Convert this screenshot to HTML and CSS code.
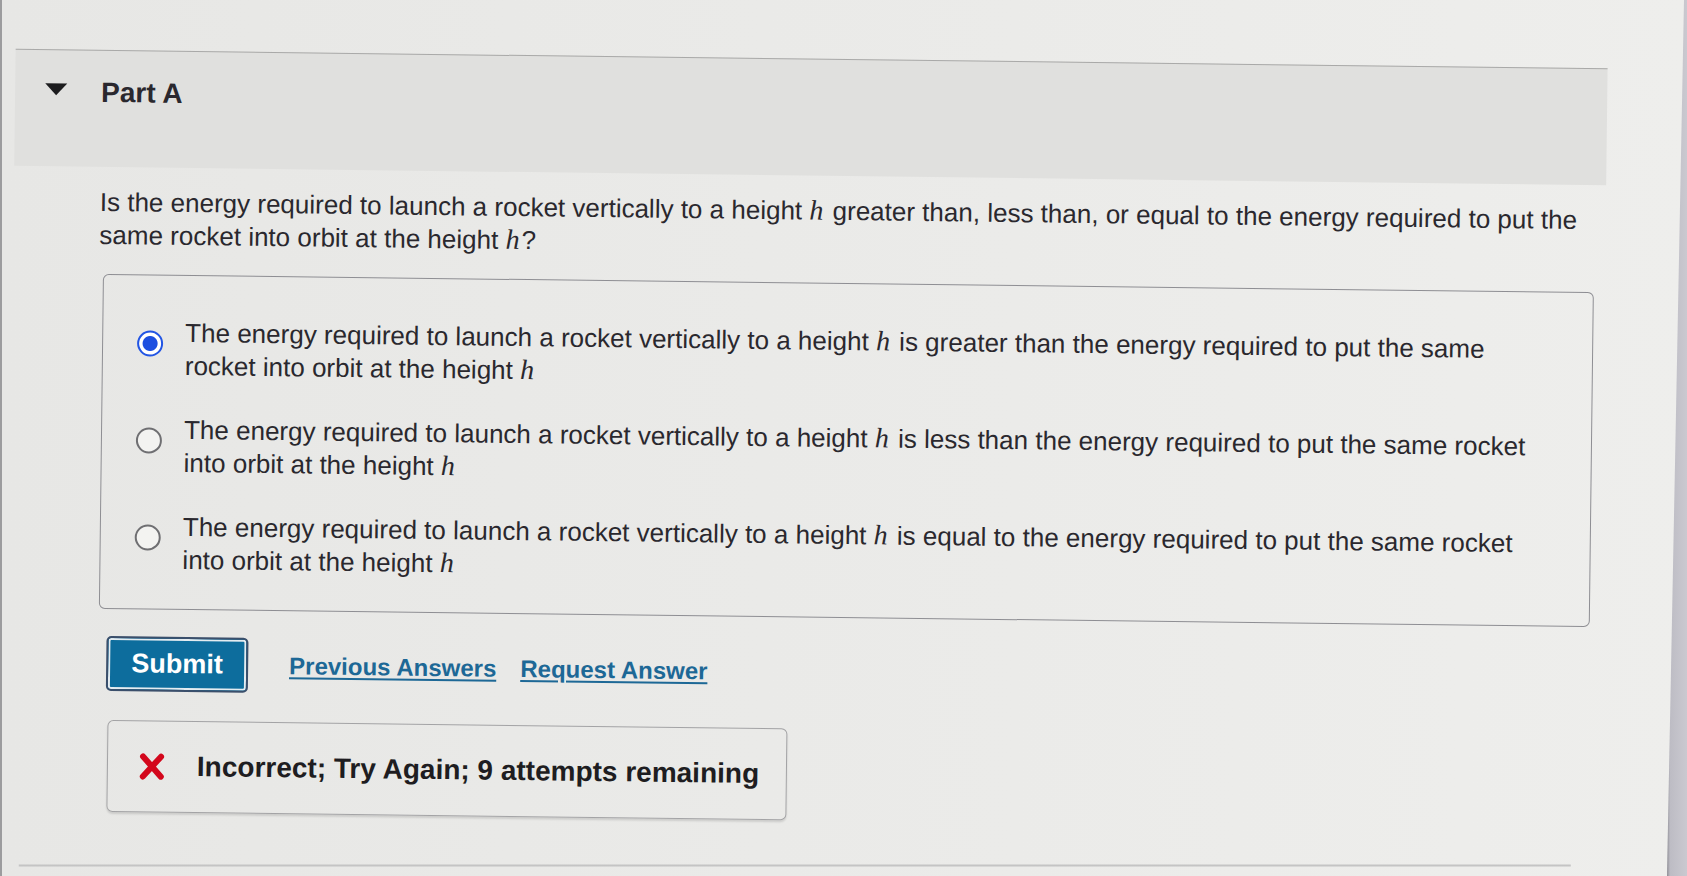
FILE: index.html
```
<!DOCTYPE html>
<html lang="en">
<head>
    <meta charset="UTF-8">
    <meta name="viewport" content="width=device-width, initial-scale=1.0">
    <title>Part A</title>
    <link rel="stylesheet" href="styles.css">
</head>
<body>
    <div class="screen">
        <div class="page">
            <section class="part">
                <header class="part-head">
                    <span class="toggle"></span>
                    <h2>Part A</h2>
                </header>
                <div class="part-body">
                    <p class="question">Is the energy required to launch a rocket vertically to a height <span class="var">h</span> greater than, less than, or equal to the energy required to put the same rocket into orbit at the height <span class="var">h</span>?</p>

                    <div class="choices">
                        <label class="choice">
                            <input type="radio" name="answer" checked>
                            <span>The energy required to launch a rocket vertically to a height <span class="var">h</span> is greater than the energy required to put the same rocket into orbit at the height <span class="var">h</span></span>
                        </label>
                        <label class="choice">
                            <input type="radio" name="answer">
                            <span>The energy required to launch a rocket vertically to a height <span class="var">h</span> is less than the energy required to put the same rocket into orbit at the height <span class="var">h</span></span>
                        </label>
                        <label class="choice">
                            <input type="radio" name="answer">
                            <span>The energy required to launch a rocket vertically to a height <span class="var">h</span> is equal to the energy required to put the same rocket into orbit at the height <span class="var">h</span></span>
                        </label>
                    </div>

                    <div class="actions">
                        <button class="submit">Submit</button>
                        <a href="#" class="link">Previous Answers</a>
                        <a href="#" class="link">Request Answer</a>
                    </div>

                    <div class="feedback">
                        <svg class="cross" width="28" height="28" viewBox="0 0 28 28">
                            <path d="M5 4 L23 24 M23 4 L5 24" stroke="#d3071c" stroke-width="6" stroke-linecap="round"/>
                        </svg>
                        <span>Incorrect; Try Again; 9 attempts remaining</span>
                    </div>
                </div>
            </section>
            <div class="bottom-rule"></div>
        </div>
        <div class="bezel"></div>
    </div>
</body>
</html>
```

FILE: styles.css
```
html, body {
    margin: 0;
    padding: 0;
}
body {
    font-family: "Liberation Sans", Arial, Helvetica, sans-serif;
    color: #2a282e;
    background-color: #e9e9e7;
    overflow: hidden;
}
.screen {
    display: flex;
    width: 1687px;
    height: 876px;
    overflow: hidden;
    border-left: 2px solid #9c9c9e;
    box-sizing: border-box;
    background: linear-gradient(to right, #e7e7e5, #ebebe9 60%, #eeeeec);
}
.page {
    flex: 1;
    padding-left: 9px;
    transform: rotate(0.7deg);
    transform-origin: 843px 438px;
}
.bezel {
    width: 20px;
    margin-left: -20px;
    background: linear-gradient(to right, #8d8c94, #bdbcc4 3px, #cac9d0);
    clip-path: polygon(17px 0, 20px 0, 20px 100%, 0 100%);
}
.part {
    width: 1592px;
}
.part-head {
    display: flex;
    align-items: center;
    margin-top: 59px;
    padding: 28px 0 60px 30px;
    border-top: 1px solid #a9a9a8;
    background-color: #e0e0de;
}
.toggle {
    width: 0;
    height: 0;
    border-left: 11px solid transparent;
    border-right: 11px solid transparent;
    border-top: 12px solid #1c1c1e;
    margin-right: 34px;
    margin-bottom: 6px;
}
.part-head h2 {
    margin: 0;
    font-size: 28px;
    line-height: 28px;
    font-weight: bold;
}
.part-body {
    padding-left: 89px;
}
.question {
    margin: 19px 0 0 -3px;
    font-size: 26px;
    line-height: 33px;
    padding-right: 6px;
}
.var {
    font-family: "Liberation Serif", "DejaVu Serif", serif;
    font-style: italic;
    font-size: 28px;
    line-height: 1;
    padding-right: 2px;
}
.choices {
    margin: 22px 0 0 1px;
    width: 1491px;
    box-sizing: border-box;
    padding: 41px 46px 32px 34px;
    border: 1px solid #8e8e93;
    border-radius: 6px;
    display: flex;
    flex-direction: column;
    gap: 31px;
}
.choice {
    display: flex;
    align-items: flex-start;
    gap: 22px;
    font-size: 26px;
    line-height: 33px;
}
.choice input {
    appearance: none;
    -webkit-appearance: none;
    flex: none;
    width: 26px;
    height: 26px;
    margin: 14px 0 0 0;
    border: 2px solid #6f6f72;
    border-radius: 50%;
    background-color: #f3f3f1;
    box-sizing: border-box;
}
.choice input:checked {
    border-color: #2255e4;
    background: radial-gradient(circle, #1d4fe0 0 7px, #ffffff 8px);
}
.actions {
    display: flex;
    align-items: center;
    margin: 27px 0 0 9px;
}
.submit {
    width: 142px;
    height: 55px;
    font-family: inherit;
    font-size: 27px;
    font-weight: bold;
    color: #ffffff;
    background-color: #0d6d9d;
    border: 2px solid #3b4f6b;
    border-radius: 5px;
    box-shadow: inset 0 0 0 2px #e4ecf1;
    cursor: pointer;
}
.link {
    font-size: 24px;
    font-weight: bold;
    color: #1d6896;
    text-decoration: underline;
    text-underline-offset: 3px;
    margin-left: 24px;
}
.submit + .link {
    margin-left: 41px;
}
.feedback {
    display: flex;
    align-items: center;
    gap: 31px;
    width: 680px;
    height: 92px;
    box-sizing: border-box;
    margin: 29px 0 0 11px;
    padding-left: 30px;
    border: 1px solid #a3a3a5;
    border-radius: 6px;
    box-shadow: 0 2px 2px rgba(0,0,0,0.12);
    font-size: 28px;
    font-weight: bold;
    color: #1e1d21;
}
.bottom-rule {
    margin: 44px 0 0 13px;
    width: 1552px;
    border-top: 2px solid #c4c4c4;
    transform: rotate(-0.7deg);
}
```
